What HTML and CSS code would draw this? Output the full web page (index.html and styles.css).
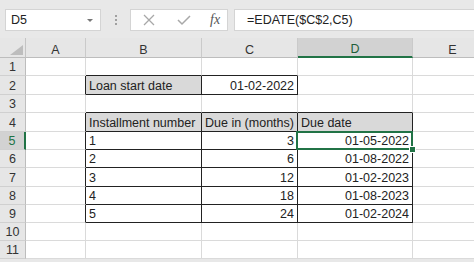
FILE: index.html
```html
<!DOCTYPE html>
<html>
  <head>
    <meta charset="UTF-8">
    <title>EDATE</title>
    <link rel="stylesheet" href="styles.css">
  </head>
  <body>
    <!-- Formula bar -->
    <div class="toolbar">
      <div class="namebox">
        <span>D5</span>
        <span class="caret"></span>
      </div>
      <div class="grip"><i></i><i></i><i></i></div>
      <div class="fxbox">
        <svg class="btn" width="14" height="14" viewBox="0 0 14 14">
          <path d="M2 2 L12 12 M12 2 L2 12" stroke="#a8a8a8" stroke-width="1.3" fill="none"/>
        </svg>
        <svg class="btn" width="16" height="14" viewBox="0 0 16 14">
          <path d="M2 7 L6 11 L14 3" stroke="#a8a8a8" stroke-width="1.5" fill="none"/>
        </svg>
        <span class="fx">fx</span>
      </div>
      <div class="formula">=EDATE($C$2,C5)</div>
    </div>

    <!-- Worksheet -->
    <div class="sheet">
      <div class="corner"><span class="tri"></span></div>
      <div class="colhead">A</div>
      <div class="colhead">B</div>
      <div class="colhead">C</div>
      <div class="colhead active">D</div>
      <div class="colhead">E</div>

      <div class="rowhead">1</div>
      <div class="cell"></div>
      <div class="cell edge-b"></div>
      <div class="cell edge-b"></div>
      <div class="cell"></div>
      <div class="cell"></div>

      <div class="rowhead">2</div>
      <div class="cell edge-r"></div>
      <div class="cell t gray">Loan start date</div>
      <div class="cell t num">01-02-2022</div>
      <div class="cell"></div>
      <div class="cell"></div>

      <div class="rowhead">3</div>
      <div class="cell"></div>
      <div class="cell edge-b"></div>
      <div class="cell edge-b"></div>
      <div class="cell edge-b"></div>
      <div class="cell"></div>

      <div class="rowhead">4</div>
      <div class="cell edge-r"></div>
      <div class="cell t gray">Installment number</div>
      <div class="cell t gray">Due in (months)</div>
      <div class="cell t gray">Due date</div>
      <div class="cell"></div>

      <div class="rowhead active">5</div>
      <div class="cell edge-r"></div>
      <div class="cell t">1</div>
      <div class="cell t num">3</div>
      <div class="cell t num sel">01-05-2022</div>
      <div class="cell"></div>

      <div class="rowhead">6</div>
      <div class="cell edge-r"></div>
      <div class="cell t">2</div>
      <div class="cell t num">6</div>
      <div class="cell t num">01-08-2022</div>
      <div class="cell"></div>

      <div class="rowhead">7</div>
      <div class="cell edge-r"></div>
      <div class="cell t">3</div>
      <div class="cell t num">12</div>
      <div class="cell t num">01-02-2023</div>
      <div class="cell"></div>

      <div class="rowhead">8</div>
      <div class="cell edge-r"></div>
      <div class="cell t">4</div>
      <div class="cell t num">18</div>
      <div class="cell t num">01-08-2023</div>
      <div class="cell"></div>

      <div class="rowhead">9</div>
      <div class="cell edge-r"></div>
      <div class="cell t">5</div>
      <div class="cell t num">24</div>
      <div class="cell t num">01-02-2024</div>
      <div class="cell"></div>

      <div class="rowhead">10</div>
      <div class="cell"></div>
      <div class="cell"></div>
      <div class="cell"></div>
      <div class="cell"></div>
      <div class="cell"></div>

      <div class="rowhead">11</div>
      <div class="cell"></div>
      <div class="cell"></div>
      <div class="cell"></div>
      <div class="cell"></div>
      <div class="cell"></div>
    </div>
  </body>
</html>
```

FILE: styles.css
```css
body {
  margin: 0;
  width: 474px;
  height: 262px;
  overflow: hidden;
  background-color: #e8e8e8;
  font-family: "Liberation Sans", Arial, sans-serif;
  color: #222;
}
.toolbar {
  display: flex;
  height: 22px;
  padding: 9px 0 0 5px;
}
.namebox {
  width: 96px;
  box-sizing: border-box;
  background: white;
  border: 1px solid #d4d4d4;
  display: flex;
  align-items: center;
  justify-content: space-between;
  padding: 0 7px 0 5px;
  font-size: 12.5px;
}
.caret {
  width: 0;
  height: 0;
  border-left: 3px solid transparent;
  border-right: 3px solid transparent;
  border-top: 3px solid #777;
}
.grip {
  width: 29px;
  display: flex;
  flex-direction: column;
  align-items: center;
  justify-content: center;
  gap: 2px;
}
.grip i {
  width: 2px;
  height: 2px;
  background: #a0a0a0;
}
.fxbox {
  width: 98px;
  box-sizing: border-box;
  background: white;
  border: 1px solid #d4d4d4;
  display: flex;
  align-items: center;
  padding-left: 11px;
  gap: 20px;
}
.fx {
  font-family: "Liberation Serif", serif;
  font-style: italic;
  font-size: 14px;
  color: #555;
  margin-left: -2px;
}
.formula {
  flex: 1;
  margin-left: 6px;
  background: white;
  border: 1px solid #d4d4d4;
  border-right: none;
  display: flex;
  align-items: center;
  padding-left: 12px;
  font-size: 12.5px;
}
.sheet {
  display: grid;
  grid-template-columns: 26px 60px 116px 96px 115px 80px;
  grid-template-rows: 20px 18px 19px 18px 19px 18px 18px 19px 18px 18px 18px 18px;
  margin-top: 7px;
  background: white;
  font-size: 12.5px;
}
.sheet > div {
  box-sizing: border-box;
  border-right: 1px solid #dadada;
  border-bottom: 1px solid #dadada;
}
.corner {
  background: #e6e6e6;
  position: relative;
  border-right-color: #c4c4c4 !important;
  border-bottom-color: #bdbdbd !important;
}
.tri {
  position: absolute;
  right: 2px;
  bottom: 2px;
  width: 0;
  height: 0;
  border-left: 13px solid transparent;
  border-bottom: 10px solid #bdbdbd;
}
.colhead {
  background: #e6e6e6;
  border-right-color: #cacaca !important;
  border-bottom-color: #bdbdbd !important;
  display: flex;
  align-items: center;
  justify-content: center;
  padding-top: 4px;
  color: #333;
}
.colhead.active {
  background: #d2d2d2;
  border-bottom: 2px solid #217346 !important;
  color: #1f5e39;
}
.rowhead {
  background: #e6e6e6;
  border-right-color: #bdbdbd !important;
  border-bottom-color: #d0d0d0 !important;
  display: flex;
  align-items: flex-end;
  justify-content: center;
  padding-bottom: 1px;
  color: #333;
}
.rowhead.active {
  background: #d2d2d2;
  border-right: 2px solid #217346 !important;
  color: #217346;
}
.cell {
  display: flex;
  align-items: flex-end;
  padding: 0 3px 1px;
  white-space: nowrap;
  overflow: hidden;
}
.cell.t {
  border-right-color: #222;
  border-bottom-color: #222;
}
.cell.edge-r {
  border-right-color: #222;
}
.cell.edge-b {
  border-bottom-color: #222;
}
.gray {
  background: #d9d9d9;
}
.num {
  justify-content: flex-end;
}
.sel {
  position: relative;
  overflow: visible;
}
.sel::after {
  content: "";
  position: absolute;
  top: -1px;
  left: -2px;
  right: -1px;
  bottom: -1px;
  border: 2px solid #217346;
}
.sel::before {
  content: "";
  position: absolute;
  right: -4px;
  bottom: -4px;
  width: 5px;
  height: 5px;
  background: #217346;
  border: 1px solid white;
  z-index: 1;
}
```
